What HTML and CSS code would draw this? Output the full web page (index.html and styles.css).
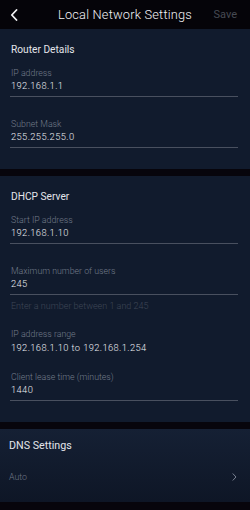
FILE: index.html
```html
<!DOCTYPE html>
<html lang="en">
<head>
<meta charset="utf-8">
<title>Local Network Settings</title>
<link rel="stylesheet" href="styles.css">
</head>
<body>
<div class="screen">
  <header class="topbar">
    <span class="back">
      <svg width="8" height="12" viewBox="0 0 8 12"><polyline points="6.5,1 1.8,6 6.5,11" fill="none" stroke="#f2f2f4" stroke-width="1.8" stroke-linecap="round" stroke-linejoin="round"/></svg>
    </span>
    <h1 class="title">Local Network Settings</h1>
    <span class="save">Save</span>
  </header>

  <section class="card">
    <h2 class="card-title">Router Details</h2>
    <div class="field">
      <div class="label">IP address</div>
      <div class="value">192.168.1.1</div>
    </div>
    <div class="field">
      <div class="label">Subnet Mask</div>
      <div class="value">255.255.255.0</div>
    </div>
  </section>

  <section class="card">
    <h2 class="card-title">DHCP Server</h2>
    <div class="field">
      <div class="label">Start IP address</div>
      <div class="value">192.168.1.10</div>
    </div>
    <div class="field">
      <div class="label">Maximum number of users</div>
      <div class="value">245</div>
    </div>
    <div class="hint">Enter a number between 1 and 245</div>
    <div class="info">
      <div class="label">IP address range</div>
      <div class="value">192.168.1.10 to 192.168.1.254</div>
    </div>
    <div class="field field-after-info">
      <div class="label">Client lease time (minutes)</div>
      <div class="value">1440</div>
    </div>
  </section>

  <section class="card card-dns">
    <h2 class="card-title dns-title">DNS Settings</h2>
    <div class="row">
      <span class="row-text">Auto</span>
      <svg class="chev" width="5" height="8" viewBox="0 0 5 8"><polyline points="1,0.8 4,4 1,7.2" fill="none" stroke="#7a8292" stroke-width="1" stroke-linecap="round" stroke-linejoin="round"/></svg>
    </div>
  </section>
</div>
</body>
</html>
```

FILE: styles.css
```css
html, body {
  margin: 0;
  padding: 0;
}

body {
  background: #07050c;
  font-family: Roboto, "Liberation Sans", Arial, sans-serif;
  color: #e9ebef;
  width: 250px;
  height: 510px;
  overflow: hidden;
}

.screen {
  display: flex;
  flex-direction: column;
}

.topbar {
  height: 29px;
  background: #050409;
  display: grid;
  grid-template-columns: 1fr auto 1fr;
  align-items: center;
}

.back {
  display: flex;
  align-items: center;
  padding-left: 10px;
  height: 12px;
}

.title {
  margin: 0;
  font-size: 12.8px;
  font-weight: 300;
  color: #f2f2f5;
  line-height: 16px;
  letter-spacing: 0.2px;
}

.save {
  justify-self: end;
  padding-right: 13px;
  font-size: 11px;
  color: #464a53;
  line-height: 16px;
}

.card {
  background: #111b2d;
  padding: 14px 12px 21px 10px;
}

.card + .card {
  margin-top: 7px;
}

.card-title {
  margin: 0 0 11px 1px;
  font-size: 10.2px;
  font-weight: 400;
  line-height: 14px;
  color: #e3e5ea;
}

.field {
  border-bottom: 1px solid #49505f;
  padding-bottom: 4px;
}

.field + .field {
  margin-top: 22px;
}

.label {
  margin-left: 1px;
  font-size: 8.8px;
  font-weight: 300;
  line-height: 10px;
  color: #737b8b;
}

.value {
  margin: 2px 0 0 1px;
  font-size: 9.3px;
  font-weight: 300;
  line-height: 12px;
  color: #eceef2;
  letter-spacing: 0.4px;
}

.hint {
  margin: 6px 0 0 1px;
  font-size: 9px;
  font-weight: 300;
  line-height: 10px;
  color: #3e4656;
}

.info {
  margin-top: 18px;
}

.info .value {
  margin-top: 3px;
}

.field-after-info {
  margin-top: 18px;
}

.card-dns {
  background: linear-gradient(#152034, #0e1626);
  padding: 10px 13px 19px 9px;
}

.dns-title {
  margin: 0 0 18px 0;
  font-size: 10.7px;
}

.row {
  display: flex;
  justify-content: space-between;
  align-items: center;
  height: 12px;
}

.row-text {
  font-size: 8.8px;
  font-weight: 300;
  line-height: 12px;
  color: #6e7686;
}
```
